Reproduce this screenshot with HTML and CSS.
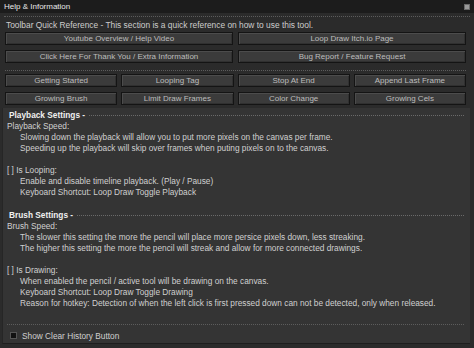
FILE: index.html
```html
<!DOCTYPE html>
<html>
<head>
<meta charset="utf-8">
<link rel="stylesheet" href="styles.css">
</head>
<body>
<div class="win">
  <div class="titlebar">
    <span class="title">Help &amp; Information</span>
    <span class="close"></span>
  </div>
  <div class="dots top-dots"></div>
  <div class="intro">Toolbar Quick Reference - This section is a quick reference on how to use this tool.</div>
  <div class="grid2">
    <div class="btn">Youtube Overview / Help Video</div>
    <div class="btn">Loop Draw Itch.io Page</div>
    <div class="btn">Click Here For Thank You / Extra Information</div>
    <div class="btn">Bug Report / Feature Request</div>
  </div>
  <div class="dots mid-dots"></div>
  <div class="grid4">
    <div class="btn">Getting Started</div>
    <div class="btn">Looping Tag</div>
    <div class="btn">Stop At End</div>
    <div class="btn">Append Last Frame</div>
    <div class="btn">Growing Brush</div>
    <div class="btn">Limit Draw Frames</div>
    <div class="btn">Color Change</div>
    <div class="btn">Growing Cels</div>
  </div>
  <div class="panel">
    <div class="section"><span class="sec-title">Playback Settings -</span><span class="sec-line"></span></div>
    <div class="line">Playback Speed:</div>
    <div class="line ind">Slowing down the playback will allow you to put more pixels on the canvas per frame.</div>
    <div class="line ind">Speeding up the playback will skip over frames when puting pixels on to the canvas.</div>
    <div class="line"></div>
    <div class="line">[ ] Is Looping:</div>
    <div class="line ind">Enable and disable timeline playback. (Play / Pause)</div>
    <div class="line ind">Keyboard Shortcut: Loop Draw Toggle Playback</div>
    <div class="line"></div>
    <div class="section"><span class="sec-title">Brush Settings -</span><span class="sec-line"></span></div>
    <div class="line">Brush Speed:</div>
    <div class="line ind">The slower this setting the more the pencil will place more persice pixels down, less streaking.</div>
    <div class="line ind">The higher this setting the more the pencil will streak and allow for more connected drawings.</div>
    <div class="line"></div>
    <div class="line">[ ] Is Drawing:</div>
    <div class="line ind">When enabled the pencil / active tool will be drawing on the canvas.</div>
    <div class="line ind">Keyboard Shortcut: Loop Draw Toggle Drawing</div>
    <div class="line ind">Reason for hotkey: Detection of when the left click is first pressed down can not be detected, only when released.</div>
    <div class="line"></div>
    <div class="dots panel-dots"></div>
    <div class="check-row"><span class="check"></span><span>Show Clear History Button</span></div>
  </div>
</div>
</body>
</html>
```

FILE: styles.css
```css
html, body {
  margin: 0;
  padding: 0;
  background: #2a2a2a;
}
.win {
  width: 474px;
  height: 348px;
  box-sizing: border-box;
  background: #2b2b2b;
  font-family: "Liberation Sans", Arial, sans-serif;
  font-size: 8px;
  color: #d4d4d4;
  display: flex;
  flex-direction: column;
  overflow: hidden;
}
.titlebar {
  height: 13px;
  background: #1c1c1c;
  display: flex;
  align-items: center;
  justify-content: space-between;
  padding: 0 4px 0 4px;
  flex: none;
}
.title {
  color: #e8e8e8;
  font-size: 8px;
}
.close {
  width: 6px;
  height: 6px;
  background: #9a9a9a;
  border: 1px solid #6a6a6a;
  box-sizing: border-box;
}
.dots {
  height: 0;
  border-top: 1px dotted #5c5c5c;
  flex: none;
}
.top-dots {
  margin: 3px 4px 0 4px;
}
.intro {
  height: 11px;
  line-height: 11px;
  padding-left: 6px;
  margin-top: 3px;
  color: #cdcdcd;
  font-size: 8.4px;
  flex: none;
}
.grid2 {
  display: grid;
  grid-template-columns: 1fr 1fr;
  column-gap: 5px;
  row-gap: 5px;
  padding: 1px 8px 0 5px;
  flex: none;
}
.grid4 {
  display: grid;
  grid-template-columns: 1fr 1fr 1fr 1fr;
  column-gap: 4px;
  row-gap: 5px;
  padding: 3px 8px 0 5px;
  flex: none;
}
.mid-dots {
  margin: 7px 8px 0 5px;
}
.btn {
  height: 13px;
  box-sizing: border-box;
  background: #3b3b3b;
  border: 1px solid #141414;
  box-shadow: inset 1px 1px 0 #4c4c4c, inset -1px -1px 0 #303030;
  color: #bdbdbd;
  text-align: center;
  line-height: 11px;
  font-size: 8px;
  white-space: nowrap;
}
.panel {
  margin: 3px 4px 0 2px;
  background: #343434;
  border-left: 1px solid #262626;
  flex: 1;
  padding: 1px 0 0 4px;
  border-bottom: 1px solid #1e1e1e;
  margin-bottom: 4px;
  font-size: 8.3px;
}
.section {
  display: flex;
  align-items: center;
  height: 12px;
  padding-left: 2px;
}
.sec-title {
  color: #f0f0f0;
  font-weight: bold;
  margin-right: 4px;
  white-space: nowrap;
}
.sec-line {
  flex: 1;
  border-top: 1px dotted #6a6a6a;
  margin-right: 6px;
}
.line {
  height: 11px;
  line-height: 11px;
  white-space: nowrap;
  color: #d0d0d0;
}
.ind {
  padding-left: 13px;
}
.panel-dots {
  margin: 4px 6px 5px 0;
}
.check-row {
  display: flex;
  align-items: center;
  height: 11px;
  gap: 5px;
  padding-left: 3px;
  color: #d0d0d0;
}
.check {
  width: 5px;
  height: 5px;
  background: #111;
  border: 1px solid #555;
}
```
